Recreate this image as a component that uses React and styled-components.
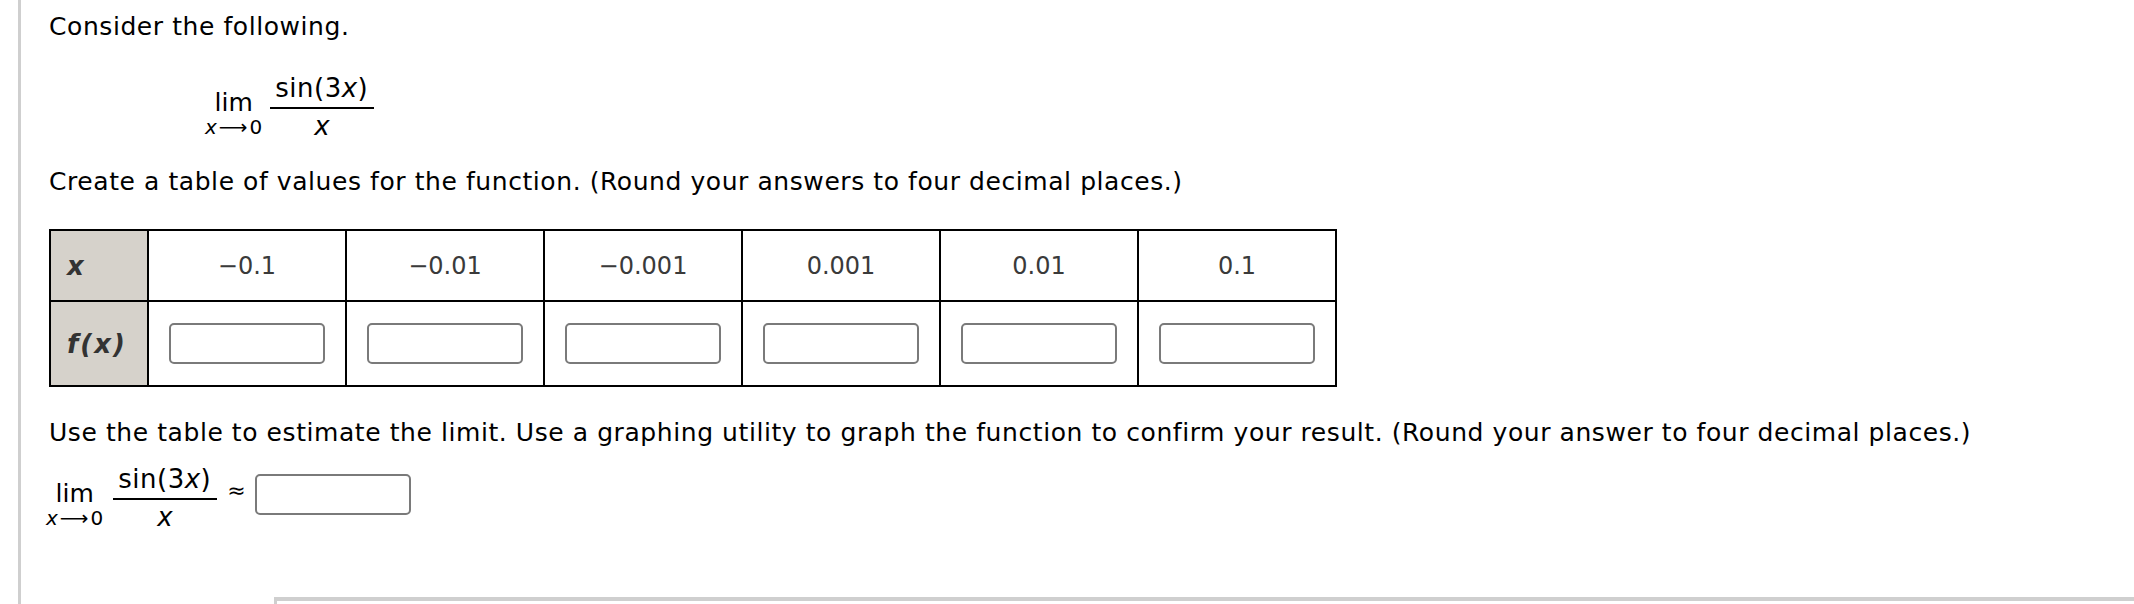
import React from 'react';
import styled, { createGlobalStyle } from 'styled-components';

const GlobalStyle = createGlobalStyle`
  html, body {
    margin: 0;
    padding: 0;
    background: #fff;
  }
  body {
    font-family: "DejaVu Sans", Verdana, sans-serif;
    color: #000;
  }
`;

const Page = styled.div`
  margin-left: 18px;
  border-left: 3px solid #cfcfcf;
  padding: 9px 0 0 28px;
  min-height: 100vh;
  box-sizing: border-box;
`;

const Text = styled.p`
  margin: ${(p) => p.top || 0}px 0 0;
  font-size: 25px;
  line-height: 36px;
  letter-spacing: 0.57px;
  white-space: nowrap;
`;

const MathBlock = styled.div`
  display: flex;
  align-items: flex-start;
  margin: ${(p) => p.top}px 0 0 ${(p) => p.indent}px;
`;

const LimOp = styled.div`
  display: flex;
  flex-direction: column;
  align-items: center;
  margin: 17px ${(p) => p.after}px 0 0;
`;

const LimWord = styled.span`
  font-size: 25px;
  line-height: 26px;
`;

const LimSub = styled.span`
  font-size: 20px;
  line-height: 22px;
  white-space: nowrap;
`;

const Arrow = styled.span`
  margin: 0 2px;
`;

const Frac = styled.div`
  display: flex;
  flex-direction: column;
  align-items: center;
  font-size: 26px;
  letter-spacing: 0.5px;
`;

const Num = styled.span`
  line-height: 30px;
  padding: 0 6px 4px 5px;
  border-bottom: 2px solid #000;
`;

const Den = styled.span`
  line-height: 30px;
  padding-top: 2px;
`;

const Var = styled.i`
  font-style: italic;
`;

const Approx = styled.span`
  font-size: 22px;
  line-height: 22px;
  margin: 16px 9px 0 10px;
`;

const Table = styled.table`
  border-collapse: collapse;
  margin-top: 29px;
  font-size: 24px;
`;

const HeadCell = styled.th`
  width: 98px;
  height: ${(p) => p.h}px;
  background: #d6d2cb;
  border: 2px solid #000;
  text-align: left;
  padding: 0 0 0 16px;
  box-sizing: border-box;
  color: #333;
  font-size: 26px;
  font-style: italic;
  font-weight: bold;
  letter-spacing: 2px;
`;

const ValueCell = styled.td`
  width: 198px;
  height: ${(p) => p.h}px;
  border: 2px solid #000;
  text-align: center;
  color: #3a3a3a;
  padding: 0;
  box-sizing: border-box;
`;

const AnswerBox = styled.input`
  display: block;
  width: 156px;
  height: 41px;
  margin: ${(p) => (p.inline ? '10px 0 0' : '0 auto')};
  box-sizing: border-box;
  border: 2px solid #7a7a7a;
  border-radius: 5px;
  background: #fff;
  outline: none;
`;

const NextPanel = styled.div`
  margin: 65px 0 0 225px;
  height: 40px;
  border-top: 4px solid #cfcfcf;
  border-left: 3px solid #cfcfcf;
`;

const xs = ['\u22120.1', '\u22120.01', '\u22120.001', '0.001', '0.01', '0.1'];

const SinOverX = () => (
  <Frac>
    <Num>
      sin(3<Var>x</Var>)
    </Num>
    <Den>
      <Var>x</Var>
    </Den>
  </Frac>
);

const Lim = ({ after }) => (
  <LimOp after={after}>
    <LimWord>lim</LimWord>
    <LimSub>
      <Var>x</Var>
      <Arrow>{'\u27F6'}</Arrow>0
    </LimSub>
  </LimOp>
);

const App = () => (
  <>
    <GlobalStyle />
    <Page>
      <Text>Consider the following.</Text>
      <MathBlock top={28} indent={156}>
        <Lim after={8} />
        <SinOverX />
      </MathBlock>
      <Text top={23}>
        Create a table of values for the function. (Round your answers to four decimal places.)
      </Text>
      <Table>
        <tbody>
          <tr>
            <HeadCell h={71}>x</HeadCell>
            {xs.map((v) => (
              <ValueCell key={v} h={71}>
                {v}
              </ValueCell>
            ))}
          </tr>
          <tr>
            <HeadCell h={85}>f(x)</HeadCell>
            {xs.map((v) => (
              <ValueCell key={v} h={85}>
                <AnswerBox />
              </ValueCell>
            ))}
          </tr>
        </tbody>
      </Table>
      <Text top={28}>
        Use the table to estimate the limit. Use a graphing utility to graph the function to confirm
        your result. (Round your answer to four decimal places.)
      </Text>
      <MathBlock top={13} indent={-3}>
        <Lim after={10} />
        <SinOverX />
        <Approx>{'\u2248'}</Approx>
        <AnswerBox inline />
      </MathBlock>
      <NextPanel />
    </Page>
  </>
);

export default App;
